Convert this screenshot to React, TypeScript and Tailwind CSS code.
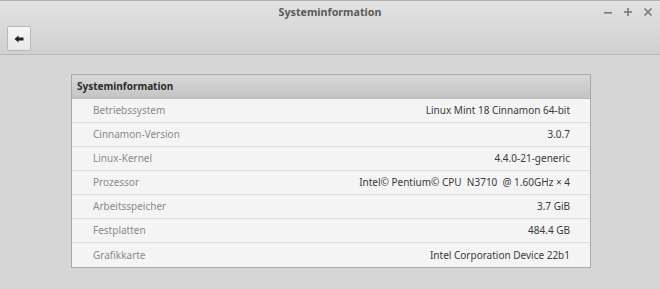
const rows: [string, string][] = [
  ["Betriebssystem", "Linux Mint 18 Cinnamon 64-bit"],
  ["Cinnamon-Version", "3.0.7"],
  ["Linux-Kernel", "4.4.0-21-generic"],
  ["Prozessor", "Intel\u00a9 Pentium\u00a9 CPU  N3710  @ 1.60GHz \u00d7 4"],
  ["Arbeitsspeicher", "3.7 GiB"],
  ["Festplatten", "484.4 GB"],
  ["Grafikkarte", "Intel Corporation Device 22b1"],
];

export default function App() {
  return (
    <div
      className="w-[660px] h-[289px] bg-[#d6d6d6] flex flex-col overflow-hidden"
      style={{ fontFamily: '"Noto Sans", sans-serif' }}
    >
      {/* header bar */}
      <div className="h-[55px] border-t border-t-[#b4b4b4] border-b border-b-[#b9b9b9] bg-gradient-to-b from-[#e2e2e2] to-[#d0d0d0] flex flex-col">
        <div className="h-[23px] relative flex items-center justify-center">
          <span className="text-[10.7px] font-bold text-[#5a5a5a] leading-none">Systeminformation</span>
          <div className="absolute right-[7px] top-[6px] flex gap-[10px] text-[#7a7a7a]">
            <svg width="10" height="10" viewBox="0 0 10 10">
              <rect x="1" y="5" width="8" height="1.6" fill="currentColor" />
            </svg>
            <svg width="10" height="10" viewBox="0 0 10 10">
              <rect x="1" y="4.2" width="8" height="1.6" fill="currentColor" />
              <rect x="4.2" y="1" width="1.6" height="8" fill="currentColor" />
            </svg>
            <svg width="10" height="10" viewBox="0 0 10 10">
              <path d="M1.5 1.5 L8.5 8.5 M8.5 1.5 L1.5 8.5" stroke="currentColor" strokeWidth="1.6" />
            </svg>
          </div>
        </div>
        <div className="flex pl-[7px] pt-[2px]">
          <button className="w-[24px] h-[25px] rounded-[2px] border border-[#b8b8b8] bg-gradient-to-b from-[#f6f6f6] to-[#e8e8e8] flex items-center justify-center">
            <svg width="10" height="8" viewBox="0 0 10 8">
              <path d="M0.5 4 L4.5 0.5 L4.5 2.6 L9.5 2.6 L9.5 5.4 L4.5 5.4 L4.5 7.5 Z" fill="#222" />
            </svg>
          </button>
        </div>
      </div>

      {/* content */}
      <div className="pt-[19px] pl-[71px]">
        <div className="w-[520px] border border-[#a9a9a9] bg-[#f4f4f4]">
          <div className="h-[24px] px-[5px] flex items-center bg-gradient-to-b from-[#d8d8d8] to-[#c4c4c4] border-b border-[#b8b8b8]">
            <span className="text-[10px] font-bold text-[#2b2b2b]">Systeminformation</span>
          </div>
          {rows.map(([label, value], i) => (
            <div
              key={label}
              className={`h-[24px] flex items-center justify-between pl-[21px] pr-[20px] text-[10px] ${
                i < rows.length - 1 ? "border-b border-[#dedede]" : ""
              }`}
            >
              <span className="text-[#8a8a8a]">{label}</span>
              <span className="text-[#3a3a3a] whitespace-pre">{value}</span>
            </div>
          ))}
        </div>
      </div>
    </div>
  );
}
